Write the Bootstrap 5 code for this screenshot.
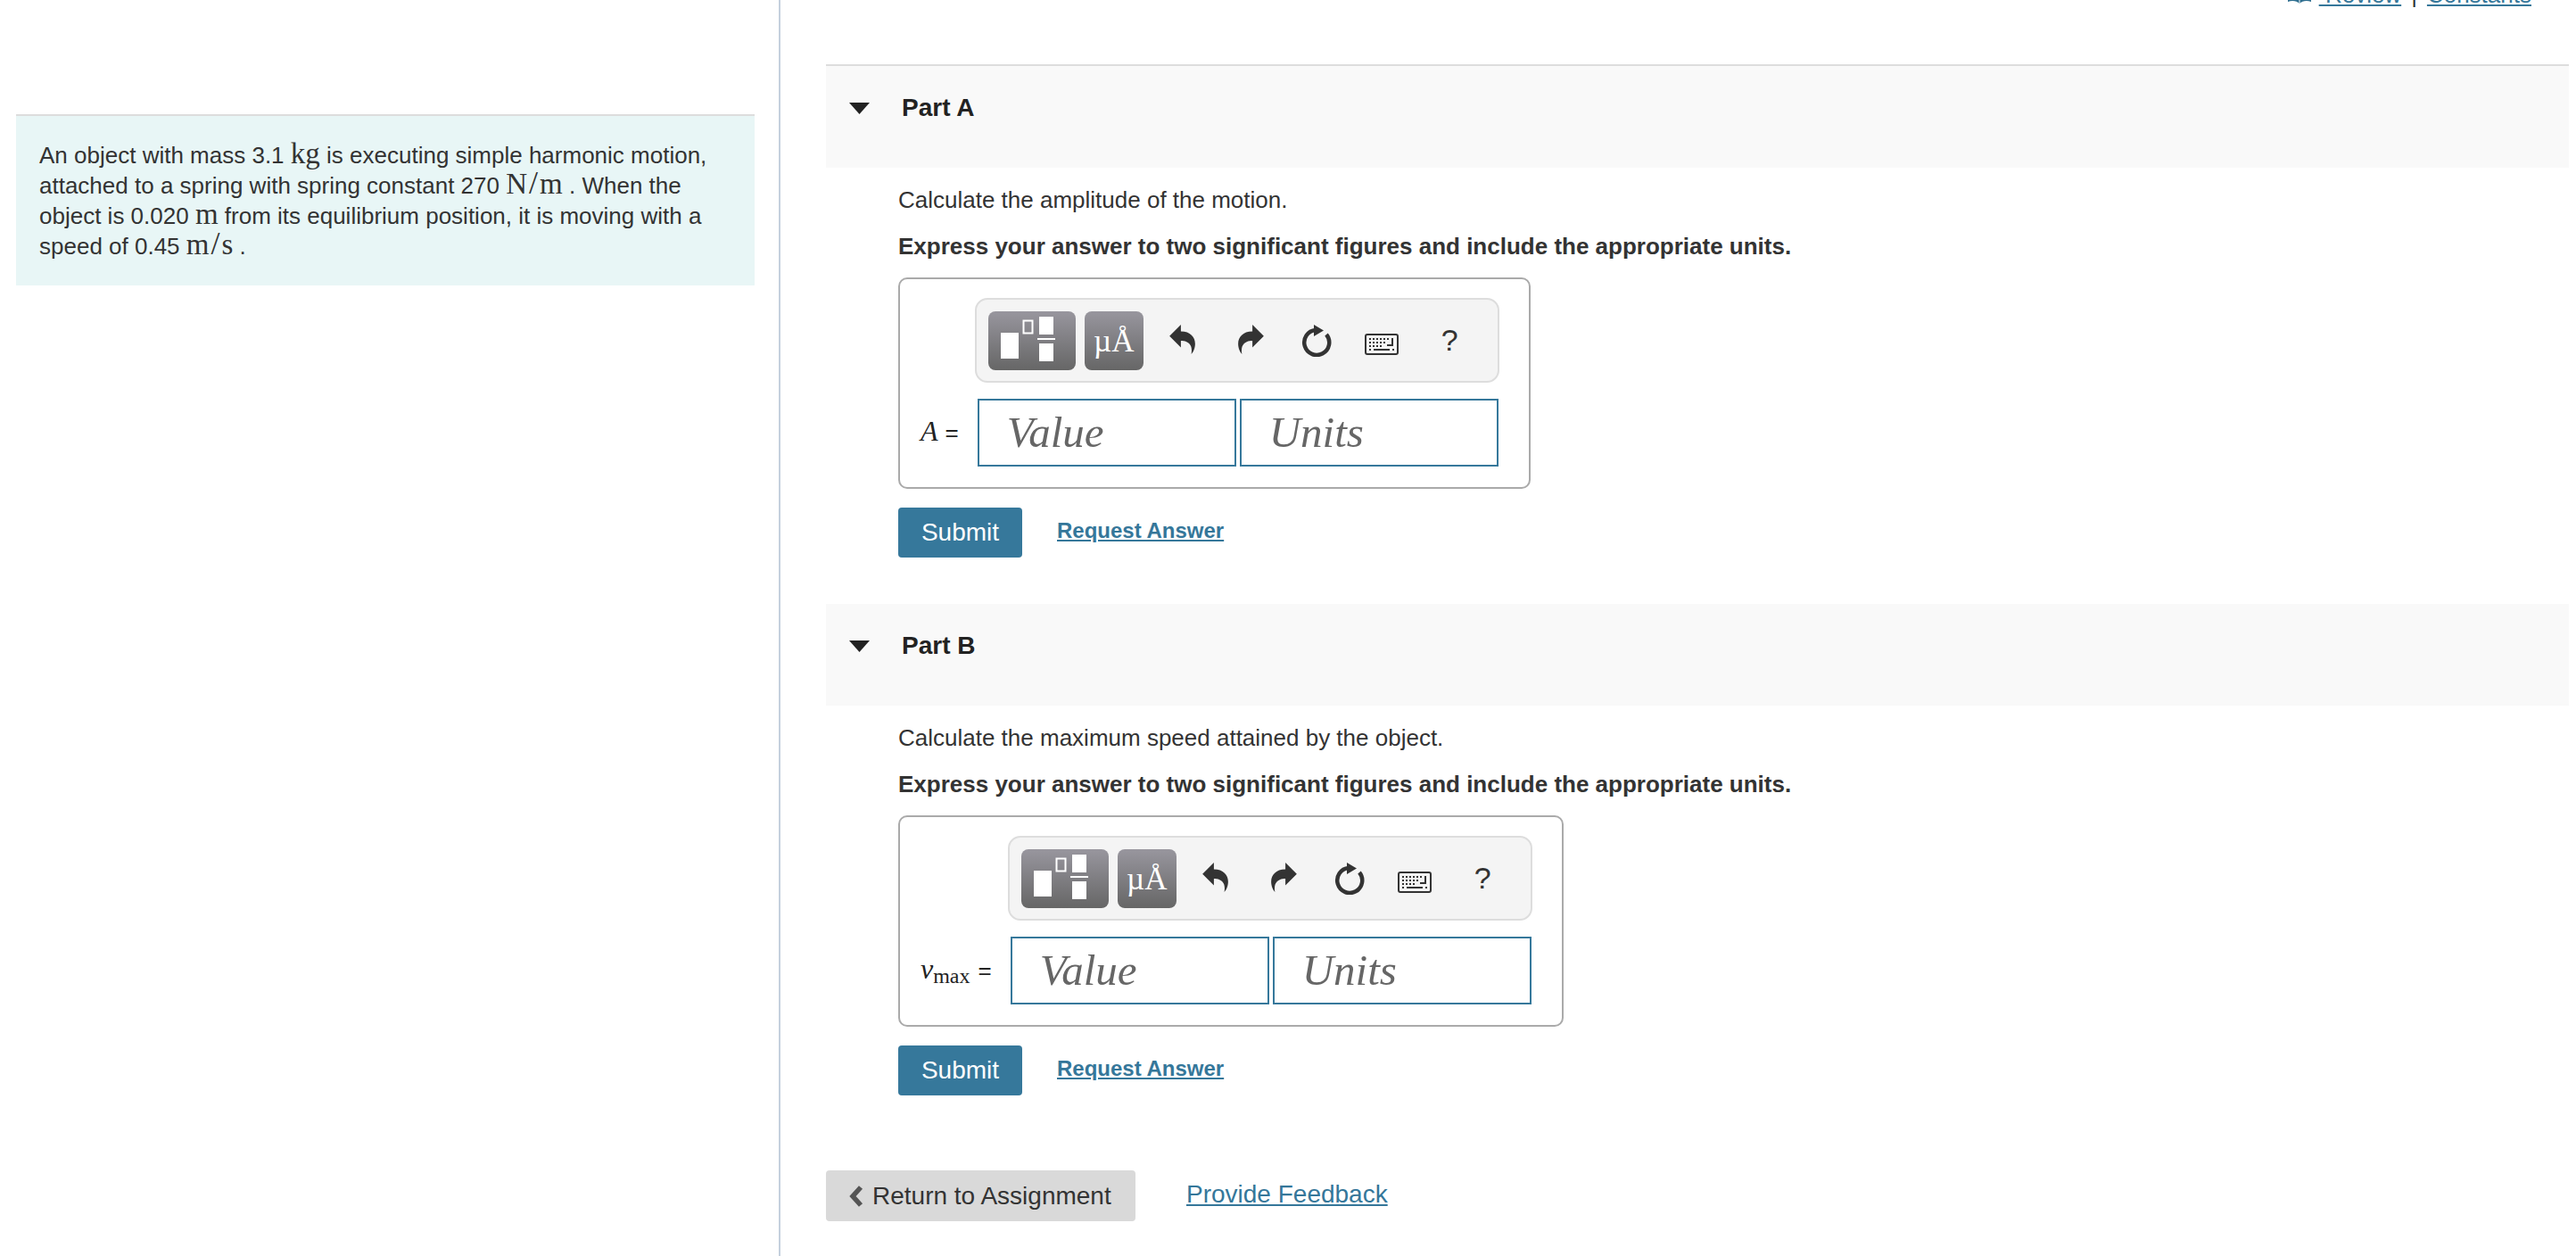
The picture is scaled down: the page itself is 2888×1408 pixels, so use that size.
<!DOCTYPE html>
<html lang="en">
<head>
    <meta charset="UTF-8">
    <title>Part A</title>
    <link rel="stylesheet" href="https://cdn.jsdelivr.net/npm/bootstrap@5.3.0/dist/css/bootstrap.min.css">
    <style>
        body { font-family: "Liberation Sans", Arial, sans-serif; font-size: 26px; color: #333; height: 100vh; overflow: hidden; background: #fff; }
        a { color: #35779a; }
        .page-wrap { height: 1408px; }
        .left-col { width: 875px; padding: 128px 27px 0 18px; border-right: 2px solid #c5d0de; flex-shrink: 0; }
        .intro-box { background: #e8f6f6; border-top: 2px solid #ddd; padding: 27px 26px 0; line-height: 34px; height: 192px; white-space: nowrap; }
        .tex { font-family: "Liberation Serif", serif; font-size: 33px; line-height: 0; }
        .tex-slash { font-size: 36px; margin: 0 2px; }
        .right-col { padding: 0 8px 0 51px; }
        .top-links { height: 93px; margin-top: -21px; padding-right: 42px; line-height: 30px; }
        .top-links svg { margin-right: 9px; }
        .top-sep { margin: 0 11px; }
        .part-head { height: 114px; background: #f9f9f9; padding: 26px 0 0 26px; font-weight: 700; font-size: 28px; color: #222; }
        .part-head-top { border-top: 2px solid #ddd; height: 116px; }
        .part-head svg { margin-right: 36px; margin-top: 15px; }
        .part-body { padding-left: 81px; }
        .part-body p { margin: 0; line-height: 30px; }
        .ask-line { padding-top: 21px; }
        .ask-hint { padding-top: 22px; font-weight: 700; }
        .answer-box { display: inline-flex; align-items: flex-end; margin-top: 20px; padding: 21px 33px 23px 23px; border: 2px solid #aaa; border-radius: 10px; }
        .answer-label { font-family: "Liberation Serif", serif; font-size: 32px; color: #222; padding-right: 21px; height: 76px; line-height: 72px; white-space: nowrap; }
        .answer-label sub { font-size: 24px; bottom: -5px; position: relative; margin-right: 1px; }
        .eq-sign { font-style: normal; font-family: "Liberation Sans", sans-serif; font-size: 26px; }
        .tool-tray { width: 588px; height: 95px; background: #f4f4f4; border: 2px solid #ddd; border-radius: 14px; padding: 13px 0 0 13px; margin-bottom: 18px; margin-left: -3px; }
        .tool-btn { height: 66px; border-radius: 8px; background: linear-gradient(#98969e, #666); flex-shrink: 0; }
        .tool-btn-wide { width: 98px; margin-right: 10px; }
        .tool-btn-unit { width: 66px; color: #fff; font-family: "Liberation Serif", serif; font-size: 35px; line-height: 68px; text-align: center; }
        .tool-undo { margin: 15px 0 0 29px; }
        .tool-redo { margin: 15px 0 0 48px; }
        .tool-reload { margin: 15px 0 0 42px; }
        .tool-keys { margin: 25px 0 0 37px; }
        .tool-mark { font-size: 34px; color: #333; margin-left: 48px; line-height: 64px; }
        .entry-row { gap: 4px; }
        .entry-slot { width: 290px; height: 76px; border: 2px solid #36789b; font-family: "Liberation Serif", serif; font-style: italic; font-size: 49px; color: #666; padding-left: 31px; line-height: 72px; }
        .action-row { margin-top: 21px; height: 56px; }
        .btn-send { width: 139px; height: 56px; background: #36789b; color: #fff; font-size: 28px; padding: 0; border: 0; border-radius: 4px; line-height: 56px; }
        .btn-send:hover { background: #36789b; color: #fff; }
        .ask-answer { font-weight: 700; margin-left: 39px; margin-top: -4px; font-size: 24px; }
        .part-gap { height: 52px; }
        .bottom-row { margin-top: 84px; }
        .btn-return { width: 347px; height: 57px; background: #d9d9d9; color: #333; font-size: 28px; padding: 0 0 0 26px; border: 0; border-radius: 4px; }
        .btn-return svg { margin-right: 10px; }
        .feedback-link { margin-left: 57px; font-size: 28px; margin-top: -3px; }
    </style>
</head>
<body>

<div class="page-wrap d-flex">
    <div class="left-col">
        <div class="intro-box">
            An object with mass 3.1 <span class="tex">kg</span> is executing simple harmonic motion,<br>
            attached to a spring with spring constant 270 <span class="tex">N<span class="tex-slash">/</span>m</span> . When the<br>
            object is 0.020 <span class="tex">m</span> from its equilibrium position, it is moving with a<br>
            speed of 0.45 <span class="tex">m<span class="tex-slash">/</span>s</span> .
        </div>
    </div>

    <div class="right-col flex-grow-1">
        <div class="top-links d-flex justify-content-end align-items-start">
            <svg width="26" height="27" viewBox="0 0 26 27"><path d="M0 4C5 2 10 3 13 6 16 3 21 2 26 4V23C21 21 16 22 13 25 10 22 5 21 0 23Z" fill="#2f6f90"/><path d="M13 6V25" stroke="#fff" stroke-width="1"/></svg>
            <a href="#">&nbsp;Review</a><span class="top-sep">|</span><a href="#">Constants</a>
        </div>

        <!-- Part A -->
        <div class="part-head part-head-top d-flex align-items-start">
            <svg width="23" height="13" viewBox="0 0 23 13"><path d="M0 0H23L11.5 13Z" fill="#222"/></svg>
            Part A
        </div>
        <div class="part-body">
            <p class="ask-line">Calculate the amplitude of the motion.</p>
            <p class="ask-hint">Express your answer to two significant figures and include the appropriate units.</p>
            <div class="answer-box">
                <div class="answer-label"><i>A</i> <span class="eq-sign">=</span></div>
                <div>
                    <div class="tool-tray d-flex align-items-start">
                        <div class="tool-btn tool-btn-wide">
                            <svg width="98" height="66" viewBox="0 0 98 66"><rect x="14" y="24" width="20" height="29" fill="#fff"/><rect x="39.500" y="10.500" width="10" height="14" fill="none" stroke="#fff" stroke-width="2"/><rect x="57" y="6" width="16" height="20" fill="#fff"/><rect x="55" y="30" width="20" height="2" fill="#fff"/><rect x="57" y="36" width="16" height="20" fill="#fff"/></svg>
                        </div>
                        <div class="tool-btn tool-btn-unit">µÅ</div>
                        <svg class="tool-undo" width="29" height="33" viewBox="0 0 27 31"><path d="M0 12 12 0V7C22 7 27 13 27 20 27 25 25 29 23 31 24 25 23 20 18 18 16 17 14 17 12 17V24Z" fill="#333"/></svg>
                        <svg class="tool-redo" width="29" height="33" viewBox="0 0 27 31"><path transform="matrix(-1 0 0 1 27 0)" d="M0 12 12 0V7C22 7 27 13 27 20 27 25 25 29 23 31 24 25 23 20 18 18 16 17 14 17 12 17V24Z" fill="#333"/></svg>
                        <svg class="tool-reload" width="34" height="36" viewBox="0 0 34 36"><path d="M16 6A14 14 0 1 0 28 11" fill="none" stroke="#333" stroke-width="4.500"/><path d="M14 0 25 6.500 14 13Z" fill="#333"/></svg>
                        <svg class="tool-keys" width="38" height="24" viewBox="0 0 38 24"><rect x="1" y="1" width="36" height="22" rx="2" fill="#f4f4f4" stroke="#333" stroke-width="2"/><path d="M5 6H7M9 6H11M13 6H15M17 6H19M21 6H23M25 6H27M5 10H7M9 10H11M13 10H15M17 10H19M21 10H23M31 5V13H25M5 14H7M9 14H11M13 14H15M17 14H19M5 18H7M10 18H28M31 18H33" stroke="#333" stroke-width="2" fill="none"/></svg>
                        <span class="tool-mark">?</span>
                    </div>
                    <div class="entry-row d-flex">
                        <div class="entry-slot">Value</div>
                        <div class="entry-slot">Units</div>
                    </div>
                </div>
            </div>
            <div class="action-row d-flex align-items-center">
                <button class="btn btn-send" type="button">Submit</button>
                <a href="#" class="ask-answer">Request Answer</a>
            </div>
        </div>
        <div class="part-gap"></div>

        <!-- Part B -->
        <div class="part-head d-flex align-items-start">
            <svg width="23" height="13" viewBox="0 0 23 13"><path d="M0 0H23L11.5 13Z" fill="#222"/></svg>
            Part B
        </div>
        <div class="part-body">
            <p class="ask-line">Calculate the maximum speed attained by the object.</p>
            <p class="ask-hint">Express your answer to two significant figures and include the appropriate units.</p>
            <div class="answer-box">
                <div class="answer-label"><i>v</i><sub>max</sub> <span class="eq-sign">=</span></div>
                <div>
                    <div class="tool-tray d-flex align-items-start">
                        <div class="tool-btn tool-btn-wide">
                            <svg width="98" height="66" viewBox="0 0 98 66"><rect x="14" y="24" width="20" height="29" fill="#fff"/><rect x="39.500" y="10.500" width="10" height="14" fill="none" stroke="#fff" stroke-width="2"/><rect x="57" y="6" width="16" height="20" fill="#fff"/><rect x="55" y="30" width="20" height="2" fill="#fff"/><rect x="57" y="36" width="16" height="20" fill="#fff"/></svg>
                        </div>
                        <div class="tool-btn tool-btn-unit">µÅ</div>
                        <svg class="tool-undo" width="29" height="33" viewBox="0 0 27 31"><path d="M0 12 12 0V7C22 7 27 13 27 20 27 25 25 29 23 31 24 25 23 20 18 18 16 17 14 17 12 17V24Z" fill="#333"/></svg>
                        <svg class="tool-redo" width="29" height="33" viewBox="0 0 27 31"><path transform="matrix(-1 0 0 1 27 0)" d="M0 12 12 0V7C22 7 27 13 27 20 27 25 25 29 23 31 24 25 23 20 18 18 16 17 14 17 12 17V24Z" fill="#333"/></svg>
                        <svg class="tool-reload" width="34" height="36" viewBox="0 0 34 36"><path d="M16 6A14 14 0 1 0 28 11" fill="none" stroke="#333" stroke-width="4.500"/><path d="M14 0 25 6.500 14 13Z" fill="#333"/></svg>
                        <svg class="tool-keys" width="38" height="24" viewBox="0 0 38 24"><rect x="1" y="1" width="36" height="22" rx="2" fill="#f4f4f4" stroke="#333" stroke-width="2"/><path d="M5 6H7M9 6H11M13 6H15M17 6H19M21 6H23M25 6H27M5 10H7M9 10H11M13 10H15M17 10H19M21 10H23M31 5V13H25M5 14H7M9 14H11M13 14H15M17 14H19M5 18H7M10 18H28M31 18H33" stroke="#333" stroke-width="2" fill="none"/></svg>
                        <span class="tool-mark">?</span>
                    </div>
                    <div class="entry-row d-flex">
                        <div class="entry-slot">Value</div>
                        <div class="entry-slot">Units</div>
                    </div>
                </div>
            </div>
            <div class="action-row d-flex align-items-center">
                <button class="btn btn-send" type="button">Submit</button>
                <a href="#" class="ask-answer">Request Answer</a>
            </div>
        </div>

        <div class="bottom-row d-flex align-items-center">
            <button class="btn btn-return d-flex align-items-center" type="button">
                <svg width="16" height="26" viewBox="0 0 16 26"><path d="M13 3 4 13 13 23" fill="none" stroke="#555" stroke-width="5.500"/></svg>
                Return to Assignment
            </button>
            <a href="#" class="feedback-link">Provide Feedback</a>
        </div>
    </div>
</div>

</body>
</html>
